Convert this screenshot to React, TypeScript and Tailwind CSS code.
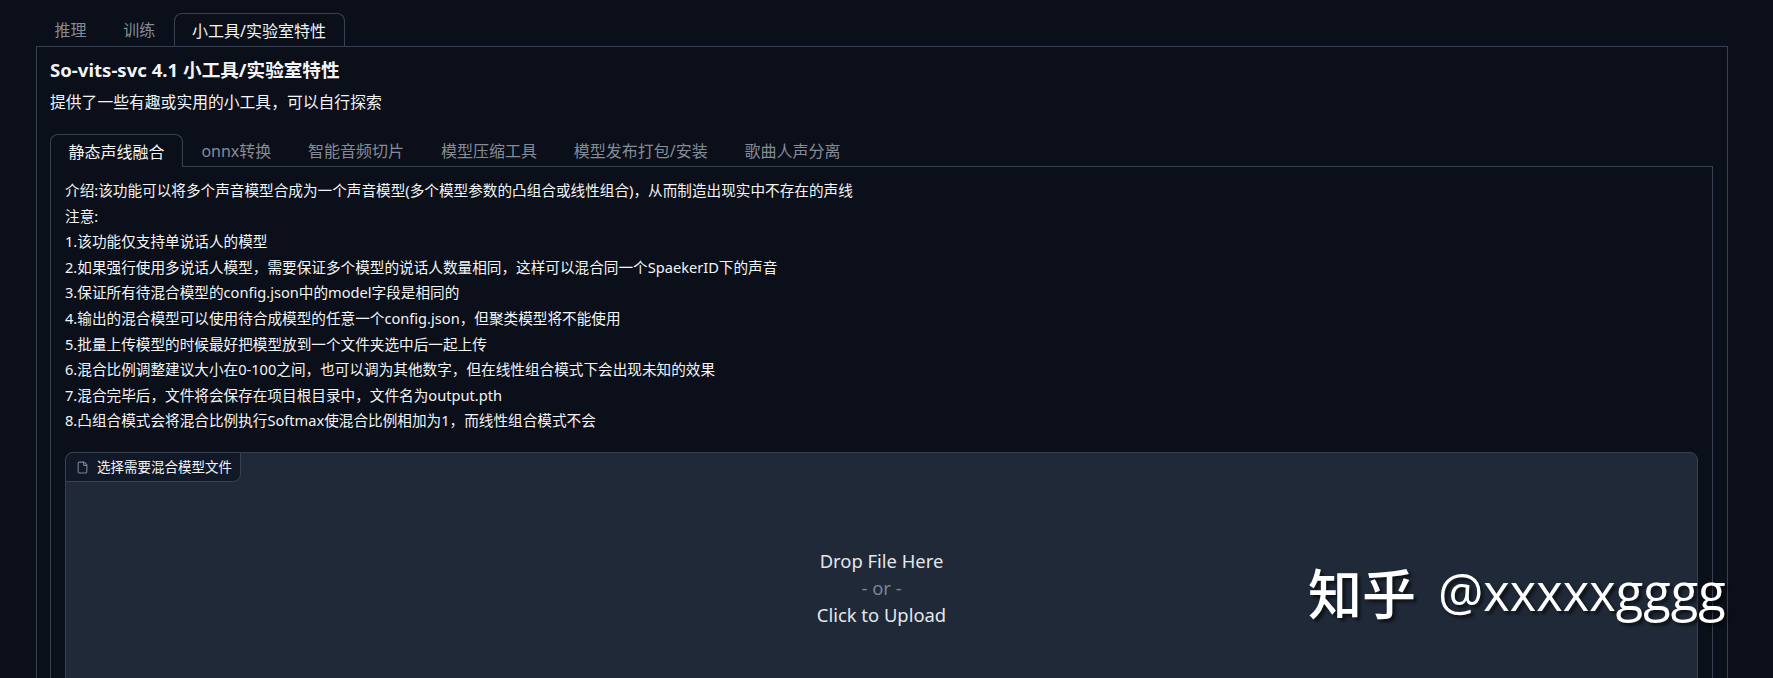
import { File } from "lucide-react";

const font = { body: "font-['Noto_Sans','Noto_Sans_CJK_SC',sans-serif]" };

const notes = [
  "介绍:该功能可以将多个声音模型合成为一个声音模型(多个模型参数的凸组合或线性组合)，从而制造出现实中不存在的声线",
  "注意:",
  "1.该功能仅支持单说话人的模型",
  "2.如果强行使用多说话人模型，需要保证多个模型的说话人数量相同，这样可以混合同一个SpaekerID下的声音",
  "3.保证所有待混合模型的config.json中的model字段是相同的",
  "4.输出的混合模型可以使用待合成模型的任意一个config.json，但聚类模型将不能使用",
  "5.批量上传模型的时候最好把模型放到一个文件夹选中后一起上传",
  "6.混合比例调整建议大小在0-100之间，也可以调为其他数字，但在线性组合模式下会出现未知的效果",
  "7.混合完毕后，文件将会保存在项目根目录中，文件名为output.pth",
  "8.凸组合模式会将混合比例执行Softmax使混合比例相加为1，而线性组合模式不会",
];

const topTabs = ["推理", "训练", "小工具/实验室特性"];
const toolTabs = ["静态声线融合", "onnx转换", "智能音频切片", "模型压缩工具", "模型发布打包/安装", "歌曲人声分离"];

function Tab({ label, active }: { label: string; active: boolean }) {
  return (
    <button
      className={
        active
          ? "relative -mb-px h-[33px] rounded-t-lg border border-b-0 border-[#374151] bg-[#0b0f19] px-[17.5px] pt-[1px] text-[16px] text-[#f3f4f6]"
          : "h-[32px] border border-transparent px-[17.4px] pt-[1px] text-[16px] text-[#858b96]"
      }
    >
      {label}
    </button>
  );
}

export default function App() {
  return (
    <div className={`relative h-[678px] overflow-hidden bg-[#0b0f19] px-[36px] pt-[13px] text-[#f3f4f6] ${font.body}`}>
      <div className="flex h-[33px] items-end border-b border-transparent">
        {topTabs.map((t, i) => (
          <Tab key={t} label={t} active={i === 2} />
        ))}
      </div>

      <div className="h-[700px] w-[1692px] border border-[#374151] px-[13px] pt-[8px]">
        <h1 className="text-[18.6px] font-bold leading-[30px]">So-vits-svc 4.1 小工具/实验室特性</h1>
        <p className="mt-[4px] text-[15.8px] leading-[26px]">提供了一些有趣或实用的小工具，可以自行探索</p>

        <div className="mt-[19px] flex h-[32px] items-end">
          {toolTabs.map((t, i) => (
            <Tab key={t} label={t} active={i === 0} />
          ))}
        </div>

        <div className="w-[1663px] border border-[#374151] px-[14px] pt-[11px]">
          <div className="text-[14.64px] leading-[25.6px]">
            {notes.map((n) => (
              <p key={n}>{n}</p>
            ))}
          </div>

          <div className="relative mt-[18px] flex h-[272px] flex-col items-center justify-center rounded-lg border border-[#374151] bg-[#1f2937] text-[18.4px] leading-[27px]">
            <div className="absolute -left-px -top-px flex h-[30px] items-center gap-[8px] rounded-br-lg rounded-tl-lg border border-[#374151] bg-[#111827] pl-[10px] pr-[8px] pt-[1px] text-[13.5px]">
              <File size={13} className="text-[#7b8494]" />
              选择需要混合模型文件
            </div>
            <span className="text-[#e5e7eb]">Drop File Here</span>
            <span className="text-[#7b8494]">- or -</span>
            <span className="text-[#e5e7eb]">Click to Upload</span>
          </div>
        </div>
      </div>

      <div className="absolute left-[1308px] top-[557px] flex items-center gap-[22px] whitespace-nowrap leading-[70px] text-white [text-shadow:3px_3px_3px_rgba(0,0,0,0.55)]">
        <span className="font-['Noto_Sans_CJK_SC',sans-serif] text-[54px] font-medium">知乎</span>
        <span className="font-['Open_Sans',sans-serif] text-[50.6px]">@xxxxxgggg</span>
      </div>
    </div>
  );
}
